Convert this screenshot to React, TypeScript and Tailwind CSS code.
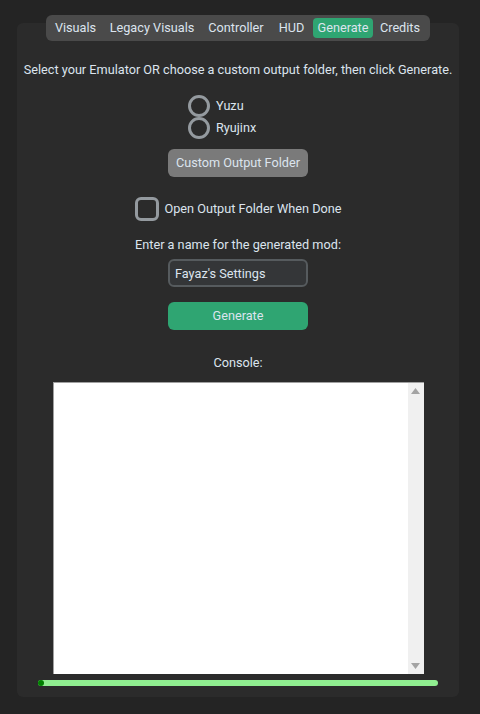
import React, { useState } from "react";

const tabs = [
  { label: "Visuals", width: "w-[53px]" },
  { label: "Legacy Visuals", width: "w-[100px]" },
  { label: "Controller", width: "w-[68px]" },
  { label: "HUD", width: "w-[43px]" },
  { label: "Generate", width: "w-[60px]" },
  { label: "Credits", width: "w-[54px]" },
];

const RadioRow = ({ label }: { label: string }) => (
  <div className="flex w-[100px] items-center gap-[6px]">
    <span className="h-[22px] w-[22px] rounded-full border-[3px] border-[#949a9f]" />
    <span>{label}</span>
  </div>
);

const App = () => {
  const [modName, setModName] = useState("Fayaz's Settings");

  return (
    <div
      className="min-h-[714px] bg-[#242424] pt-[15px] text-[12.7px] leading-4 text-[#dce4ee]"
      style={{ fontFamily: "Roboto, 'Liberation Sans', sans-serif" }}
    >
      <div className="relative z-10 ml-[46px] flex h-[26px] w-fit items-stretch rounded-md bg-[#4a4a4a] p-[3px]">
        {tabs.map((tab) => (
          <div
            key={tab.label}
            className={
              tab.label === "Generate"
                ? `flex ${tab.width} items-center justify-center rounded-[4px] bg-[#2fa572]`
                : `flex ${tab.width} items-center justify-center`
            }
          >
            {tab.label}
          </div>
        ))}
      </div>

      <div className="-mt-[18px] ml-[17px] mr-[21px] flex h-[674px] flex-col items-center rounded-md bg-[#2b2b2b] pt-[39px]">
        <p>Select your Emulator OR choose a custom output folder, then click Generate.</p>

        <div className="mt-[17px] flex flex-col">
          <RadioRow label="Yuzu" />
          <RadioRow label="Ryujinx" />
        </div>

        <button className="mt-[10px] h-[28px] w-[140px] rounded-md bg-[#7a7a7a] text-[#dce4ee]">
          Custom Output Folder
        </button>

        <label className="mt-[20px] flex items-center gap-[6px]">
          <span className="h-[24px] w-[24px] rounded-md border-[3px] border-[#949a9f]" />
          <span>Open Output Folder When Done</span>
        </label>

        <p className="mt-[16px]">Enter a name for the generated mod:</p>

        <input
          value={modName}
          onChange={(e) => setModName(e.target.value)}
          className="mt-[6px] h-[28px] w-[140px] rounded-md border-2 border-[#565b5e] bg-[#343638] px-[5px] text-[#dce4ee] outline-none"
        />

        <button className="mt-[15px] h-[28px] w-[140px] rounded-md bg-[#2fa572] text-[#dce4ee]">
          Generate
        </button>

        <p className="mt-[25px]">Console:</p>

        <div className="mt-[11px] flex h-[292px] w-[371px] border-t border-l border-[#a0a0a0] bg-white">
          <div className="flex-1" />
          <div className="flex w-[16px] flex-col items-center justify-between bg-[#f0f0f0] py-[5px]">
            <svg width="9" height="6" viewBox="0 0 9 6">
              <path d="M4.5 0 L9 6 L0 6 Z" fill="#a3a3a3" />
            </svg>
            <svg width="9" height="6" viewBox="0 0 9 6">
              <path d="M0 0 L9 0 L4.5 6 Z" fill="#a3a3a3" />
            </svg>
          </div>
        </div>

        <div className="mt-[6px] flex h-[6px] w-[400px] items-center rounded-full bg-[#90ee90]">
          <span className="h-[6px] w-[6px] rounded-full bg-[#008000]" />
        </div>
      </div>
    </div>
  );
};

export default App;
